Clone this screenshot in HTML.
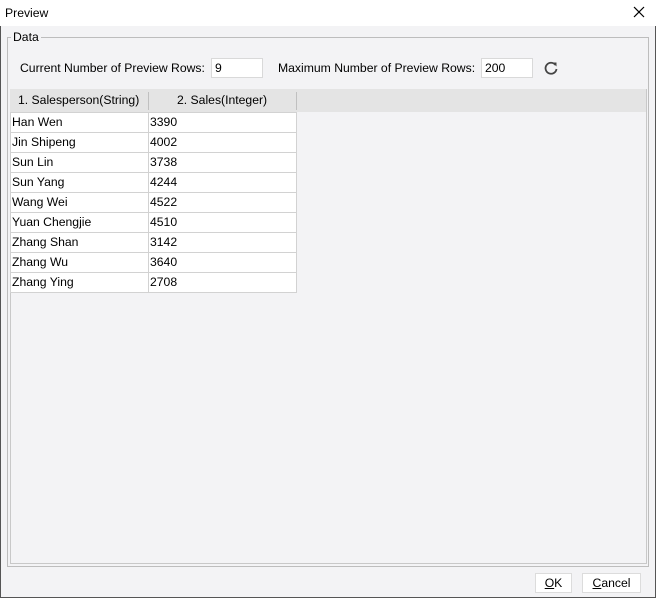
<!DOCTYPE html>
<html><head><style>
*{box-sizing:border-box;margin:0;padding:0}
body{width:656px;height:598px;background:#f3f3f5;font-family:"Liberation Sans",sans-serif;font-size:12.2px;color:#000;position:relative;overflow:hidden}
.win{position:absolute;left:0;top:0;width:656px;height:598px;border:1px solid #555;border-top:none;background:#f3f3f5}
.title{position:absolute;left:0;top:0;width:656px;height:26px;background:#fff;}
.title span{position:absolute;left:5px;top:6px}
.close{position:absolute;left:633px;top:6px}
.grp{position:absolute;left:7px;top:37px;width:642px;height:530px;border:1px solid #bdbdbd}
.legend{position:absolute;left:11px;top:30px;background:#f3f3f5;padding:0 2px}
.lbl{position:absolute;top:61px}
.inp{position:absolute;top:58px;height:20px;background:#fff;border:1px solid #d9d9d9;padding:2px 3px}
.tbl{position:absolute;left:10px;top:89px;width:637px;height:475px;border:1px solid #c8c8c8;border-top:none}
.hdr{position:absolute;left:10px;top:89px;width:636px;height:23px;background:#e4e4e4}
.h{position:absolute;top:93px;}
.sep{position:absolute;top:92px;width:1px;height:18px;background:#c0c0c0}
.cell{position:absolute;height:21px;background:#fff;border:1px solid #d2d2d2;padding:2px 1px;}
.btn{position:absolute;top:573px;height:20px;background:#fff;border:1px solid #dcdcdc;text-align:center;padding-top:2px}
</style></head><body>
<div class="win"></div>
<div class="title"><span>Preview</span>
<svg class="close" width="12" height="12" viewBox="0 0 12 12"><path d="M1 1L11 11M11 1L1 11" stroke="#000" stroke-width="1.2"/></svg></div>
<div class="grp"></div>
<div class="legend">Data</div>
<div class="lbl" style="left:20px">Current Number of Preview Rows:</div>
<div class="inp" style="left:211px;width:52px">9</div>
<div class="lbl" style="left:278px">Maximum Number of Preview Rows:</div>
<div class="inp" style="left:481px;width:52px">200</div>
<svg style="position:absolute;left:543px;top:60px" width="16" height="16" viewBox="0 0 16 16"><path d="M12.5 5A5.5 5.5 0 1 0 13.5 9" fill="none" stroke="#444" stroke-width="1.8"/><path d="M9.5 2.5L13.5 2.5L13.5 6.5Z" fill="#444"/></svg>
<div class="tbl"></div>
<div class="hdr"></div>
<div class="h" style="left:18px">1. Salesperson(String)</div>
<div class="sep" style="left:148px"></div>
<div class="h" style="left:177px">2. Sales(Integer)</div>
<div class="sep" style="left:296px"></div>
<div class="cell" style="left:10px;top:112px;width:139px">Han Wen</div><div class="cell" style="left:148px;top:112px;width:149px">3390</div>
<div class="cell" style="left:10px;top:132px;width:139px">Jin Shipeng</div><div class="cell" style="left:148px;top:132px;width:149px">4002</div>
<div class="cell" style="left:10px;top:152px;width:139px">Sun Lin</div><div class="cell" style="left:148px;top:152px;width:149px">3738</div>
<div class="cell" style="left:10px;top:172px;width:139px">Sun Yang</div><div class="cell" style="left:148px;top:172px;width:149px">4244</div>
<div class="cell" style="left:10px;top:192px;width:139px">Wang Wei</div><div class="cell" style="left:148px;top:192px;width:149px">4522</div>
<div class="cell" style="left:10px;top:212px;width:139px">Yuan Chengjie</div><div class="cell" style="left:148px;top:212px;width:149px">4510</div>
<div class="cell" style="left:10px;top:232px;width:139px">Zhang Shan</div><div class="cell" style="left:148px;top:232px;width:149px">3142</div>
<div class="cell" style="left:10px;top:252px;width:139px">Zhang Wu</div><div class="cell" style="left:148px;top:252px;width:149px">3640</div>
<div class="cell" style="left:10px;top:272px;width:139px">Zhang Ying</div><div class="cell" style="left:148px;top:272px;width:149px">2708</div>
<div class="btn" style="left:535px;width:37px"><u>O</u>K</div>
<div class="btn" style="left:582px;width:59px"><u>C</u>ancel</div>
</body></html>
